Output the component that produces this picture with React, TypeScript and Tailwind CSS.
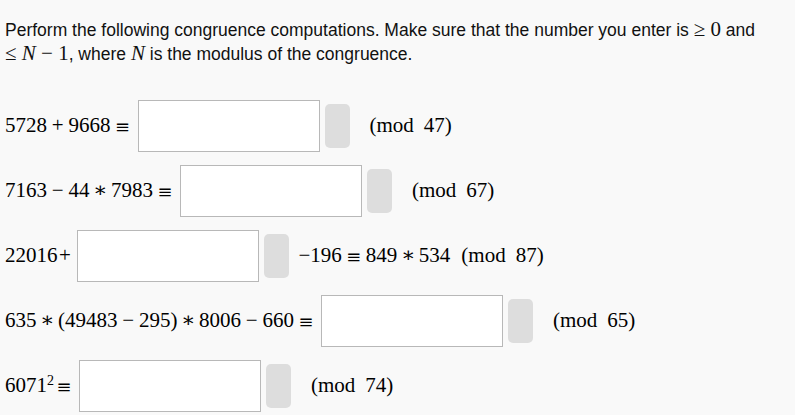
import React from "react";

const serif = "font-['Liberation_Serif','DejaVu_Serif',serif]";

function Bin({ c }: { c: string }) {
  return <span className="inline-block w-[15.5px] mx-[3px] text-center">{c}</span>;
}
function Rel() {
  return (
    <span className="inline-block w-[16px] mx-[4px] text-center font-['DejaVu_Serif',serif] text-[18px]">≡</span>
  );
}
function Box() {
  return (
    <>
      <div className="ml-[3px] w-[182px] h-[52px] bg-white border border-[#b8b8b8] shrink-0" />
      <div className="ml-[5px] w-[25px] h-[44px] rounded-[5px] bg-[#dddddd] shrink-0" />
    </>
  );
}
function Mod({ n }: { n: string }) {
  return (
    <span className={`ml-[20px] ${serif} text-[21px] whitespace-nowrap`}>
      (mod<span className="inline-block w-[10px]" />{n})
    </span>
  );
}

function M({ children }: { children: React.ReactNode }) {
  return <span className={`${serif} text-[21px] whitespace-nowrap flex items-center`}>{children}</span>;
}

export default function App() {
  return (
    <div className="w-[795px] h-[415px] bg-[#f9f9f9] text-black pl-[5px] pt-[18px] overflow-hidden">
      <div className="font-['Liberation_Sans',Arial,sans-serif] text-[17.5px] leading-[23px] text-[#111]">
        Perform the following congruence computations. Make sure that the number you enter is{" "}
        <span className={`${serif} text-[21px]`}>≥ 0</span> and
        <br />
        <span className={`${serif} text-[21px]`}>
          ≤ <i>N</i> − 1
        </span>
        , where <span className={`${serif} text-[21px]`}><i>N</i></span> is the modulus of the congruence.
      </div>

      <div className="mt-[34px] flex flex-col gap-[13px]">
        <div className="flex items-center h-[52px]">
          <M>
            5728<Bin c="+" />9668<Rel />
          </M>
          <Box />
          <Mod n="47" />
        </div>

        <div className="flex items-center h-[52px]">
          <M>
            7163<Bin c="−" />44<Bin c="∗" />7983<Rel />
          </M>
          <Box />
          <Mod n="67" />
        </div>

        <div className="flex items-center h-[52px]">
          <M>
            22016<span className="inline-block w-[15px] text-center">+</span>
          </M>
          <span className="w-[1px]" />
          <Box />
          <span className="w-[10px]" />
          <M>
            −196<Rel />849<Bin c="∗" />534
          </M>
          <span className={`ml-[11px] ${serif} text-[21px] whitespace-nowrap`}>
            (mod<span className="inline-block w-[10px]" />87)
          </span>
        </div>

        <div className="flex items-center h-[52px]">
          <M>
            635<Bin c="∗" />(49483<Bin c="−" />295)<Bin c="∗" />8006<Bin c="−" />660<Rel />
          </M>
          <Box />
          <Mod n="65" />
        </div>

        <div className="flex items-center h-[52px]">
          <M>
            6071<span className="inline-block text-[14px] relative -top-[6px] -mr-[2px]">2</span>
            <Rel />
          </M>
          <Box />
          <Mod n="74" />
        </div>
      </div>
    </div>
  );
}
